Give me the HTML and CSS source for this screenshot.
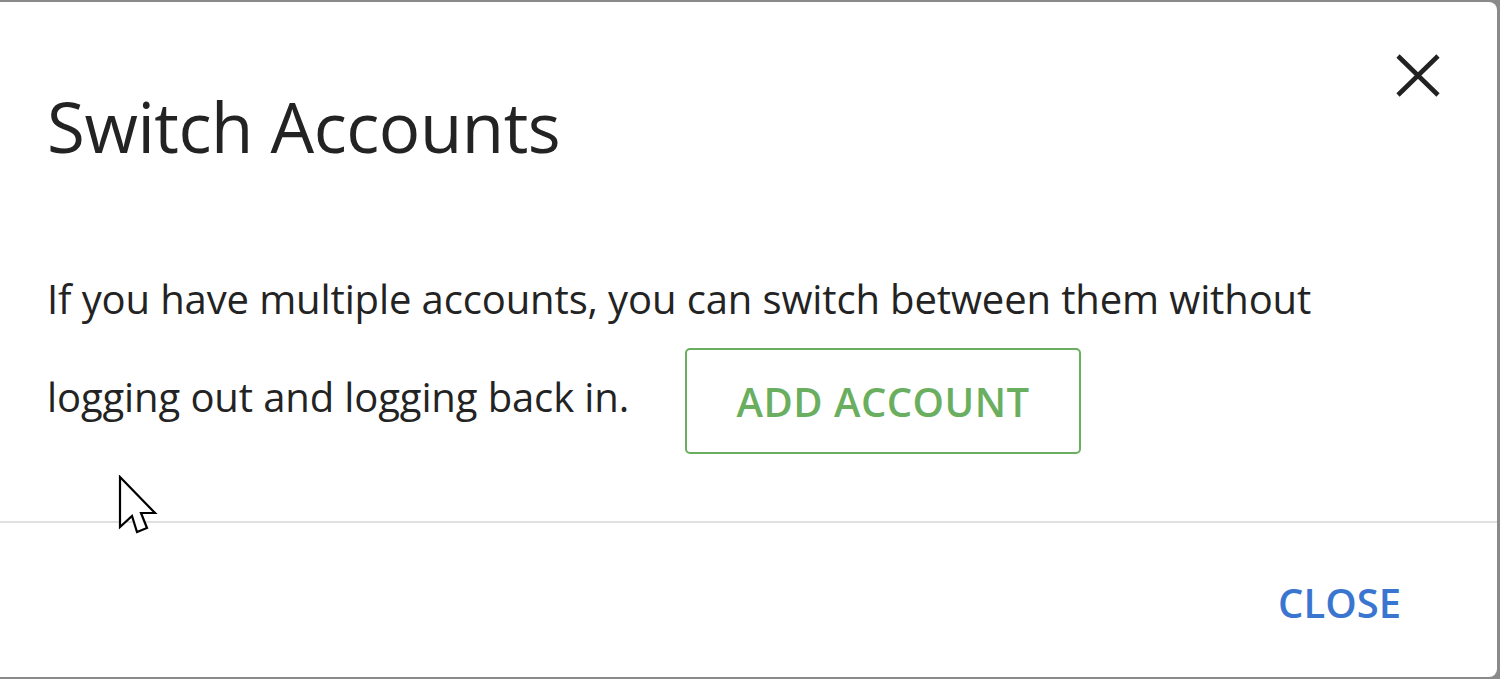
FILE: index.html
```html
<!DOCTYPE html>
<html lang="en">
<head>
<meta charset="utf-8">
<title>Switch Accounts</title>
<link rel="stylesheet" href="styles.css">
</head>
<body>
<div class="dialog">
  <header class="head">
    <h1 class="title">Switch Accounts</h1>
    <button class="x-btn" aria-label="Close">
      <svg width="46" height="44" viewBox="0 0 46 44"><path d="M4 3 L44 42 M44 3 L4 42" stroke="#222" stroke-width="4.6" fill="none"/></svg>
    </button>
  </header>
  <div class="body">
    <p class="text"><span class="copy">If you have multiple accounts, you can switch between them without</span> <span class="copy">logging out and logging back in.</span><button class="add-btn">ADD ACCOUNT</button></p>
  </div>
  <footer class="foot">
    <button class="close-btn">CLOSE</button>
  </footer>
</div>
<svg class="cursor" width="40" height="60" viewBox="0 0 40 60"><path d="M2 2 L2 52 L14 41 L19 57 L29 53 L23 38 L37 38 Z" fill="#fff" stroke="#000" stroke-width="2.2" stroke-linejoin="miter"/></svg>
</body>
</html>
```
FILE: styles.css
```css
html, body {
  margin: 0;
  padding: 0;
}
body {
  background: #8a8a8a;
  width: 1500px;
  height: 679px;
  overflow: hidden;
  position: relative;
  font-family: "Open Sans", "Liberation Sans", sans-serif;
  color: #232323;
}
.dialog {
  margin-top: 2px;
  margin-left: -10px;
  width: 1507px;
  height: 675px;
  background: #fff;
  border-radius: 8px;
  box-sizing: border-box;
}
.head {
  display: flex;
  justify-content: space-between;
  align-items: flex-start;
  padding: 51px 57px 0 57px;
}
.title {
  margin: 26px 0 0 0;
  font-size: 69px;
  font-weight: 400;
  line-height: normal;
  letter-spacing: -0.45px;
}
.x-btn {
  border: 0;
  background: none;
  padding: 0;
  margin: 0;
  display: block;
  line-height: 0;
}
.body {
  padding: 77px 57px 0 57px;
}
.text {
  margin: 0;
  width: 1340px;
  font-size: 40px;
  line-height: 98px;
  letter-spacing: -0.12px;
}
.add-btn {
  vertical-align: top;
  margin-left: 56px;
  width: 396px;
  height: 106px;
  box-sizing: border-box;
  border: 2.5px solid #6aaf5f;
  border-radius: 5px;
  background: #fff;
  color: #6aaf5f;
  font-family: "Open Sans", "Liberation Sans", sans-serif;
  font-size: 40px;
  font-weight: 600;
  letter-spacing: 0.5px;
  padding: 0;
  line-height: normal;
}
.foot {
  margin-top: 67px;
  border-top: 2px solid #e0e0e0;
  padding: 52px 96px 0 0;
  display: flex;
  justify-content: flex-end;
}
.close-btn {
  border: 0;
  background: none;
  padding: 0;
  color: #3a76cf;
  font-family: "Open Sans", "Liberation Sans", sans-serif;
  font-size: 40px;
  font-weight: 600;
  line-height: normal;
}
.cursor {
  position: absolute;
  left: 118px;
  top: 475px;
}
```
